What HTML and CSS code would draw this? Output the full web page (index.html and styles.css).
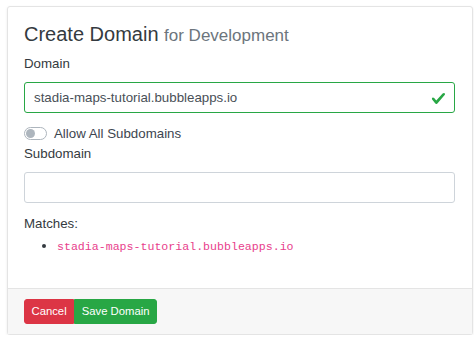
FILE: index.html
```html
<!DOCTYPE html>
<html lang="en">
<head>
    <meta charset="UTF-8">
    <meta name="viewport" content="width=device-width, initial-scale=1.0">
    <title>Create Domain</title>
    <link rel="stylesheet" href="styles.css">
</head>
<body>
    <div class="page">
        <div class="card">
            <div class="card-body">
                <h5 class="card-title">Create Domain <small class="muted">for Development</small></h5>
                <div class="form-group">
                    <label class="field-label" for="domain">Domain</label>
                    <div class="input-wrap">
                        <input type="text" id="domain" class="form-control is-valid" value="stadia-maps-tutorial.bubbleapps.io">
                        <svg class="valid-icon" viewBox="0 0 8 8" width="15" height="15">
                            <path fill="#28a745" d="M2.3 6.73L.6 4.53c-.4-1.04.46-1.4 1.1-.8l1.1 1.4 3.4-3.8c.6-.63 1.6-.27 1.2.7l-4 4.6c-.43.5-.8.4-1.1.1z"/>
                        </svg>
                    </div>
                </div>
                <label class="switch">
                    <span class="switch-track"><span class="switch-knob"></span></span>
                    Allow All Subdomains
                </label>
                <div class="form-group">
                    <label class="field-label" for="subdomain">Subdomain</label>
                    <input type="text" id="subdomain" class="form-control">
                </div>
                <p class="matches-title">Matches:</p>
                <ul class="matches">
                    <li><code>stadia-maps-tutorial.bubbleapps.io</code></li>
                </ul>
            </div>
            <div class="card-footer">
                <div class="btn-group">
                    <button type="button" class="btn btn-danger">Cancel</button>
                    <button type="button" class="btn btn-success">Save Domain</button>
                </div>
            </div>
        </div>
    </div>
</body>
</html>
```

FILE: styles.css
```css
body {
    margin: 0;
    font-family: "Liberation Sans", Arial, sans-serif;
    font-size: 13.3px;
    line-height: 20px;
    color: #343a40;
    background: #fff;
}
.page {
    padding: 6px 0 0 7px;
}
.card {
    width: 466px;
    box-sizing: border-box;
    border: 1px solid #e4e4e4;
    border-radius: 3px;
    box-shadow: 0 1px 3px rgba(0, 0, 0, 0.08);
    background: #fff;
}
.card-body {
    padding: 15px 17px 19px 16px;
}
.card-title {
    margin: 0 0 6px;
    font-size: 20px;
    line-height: 24px;
    font-weight: normal;
    color: #343a40;
}
.muted {
    font-size: 17px;
    color: #6c757d;
}
.field-label {
    display: block;
    margin-bottom: 8px;
    color: #343a40;
}
.form-group {
    margin-bottom: 11px;
}
.input-wrap {
    position: relative;
}
.form-control {
    display: block;
    width: 100%;
    height: 31px;
    box-sizing: border-box;
    padding: 0 9px;
    border: 1px solid #ced4da;
    border-radius: 3px;
    font-family: inherit;
    font-size: 13.3px;
    color: #495057;
    background: #fff;
}
.form-control.is-valid {
    border-color: #28a745;
    padding-right: 32px;
}
.valid-icon {
    position: absolute;
    right: 9px;
    top: 9px;
}
.switch {
    display: flex;
    align-items: flex-start;
    color: #3d4650;
}
.switch-track {
    width: 23px;
    height: 13px;
    box-sizing: border-box;
    margin: 3px 7px 0 0;
    border: 1px solid #adb5bd;
    border-radius: 7px;
    background: #fff;
    display: flex;
    align-items: center;
    padding-left: 1px;
}
.switch-knob {
    width: 9px;
    height: 9px;
    border-radius: 50%;
    background: #adb5bd;
}
.matches-title {
    margin: 0;
}
.matches {
    margin: 2px 0 12px;
    padding-left: 33px;
}
code {
    font-family: "Liberation Mono", "Courier New", monospace;
    font-size: 11.6px;
    color: #e83e8c;
}
.card-footer {
    padding: 10px 16px;
    border-top: 1px solid #e4e4e4;
    background: #f7f7f7;
}
.btn-group {
    display: flex;
}
.btn {
    border: 1px solid transparent;
    padding: 3px 6.5px;
    font-family: inherit;
    font-size: 11.3px;
    line-height: 17px;
    color: #fff;
    cursor: pointer;
}
.btn-danger {
    background: #dc3545;
    border-color: #dc3545;
    border-radius: 3px 0 0 3px;
}
.btn-success {
    background: #28a745;
    border-color: #28a745;
    border-radius: 0 3px 3px 0;
}
```
